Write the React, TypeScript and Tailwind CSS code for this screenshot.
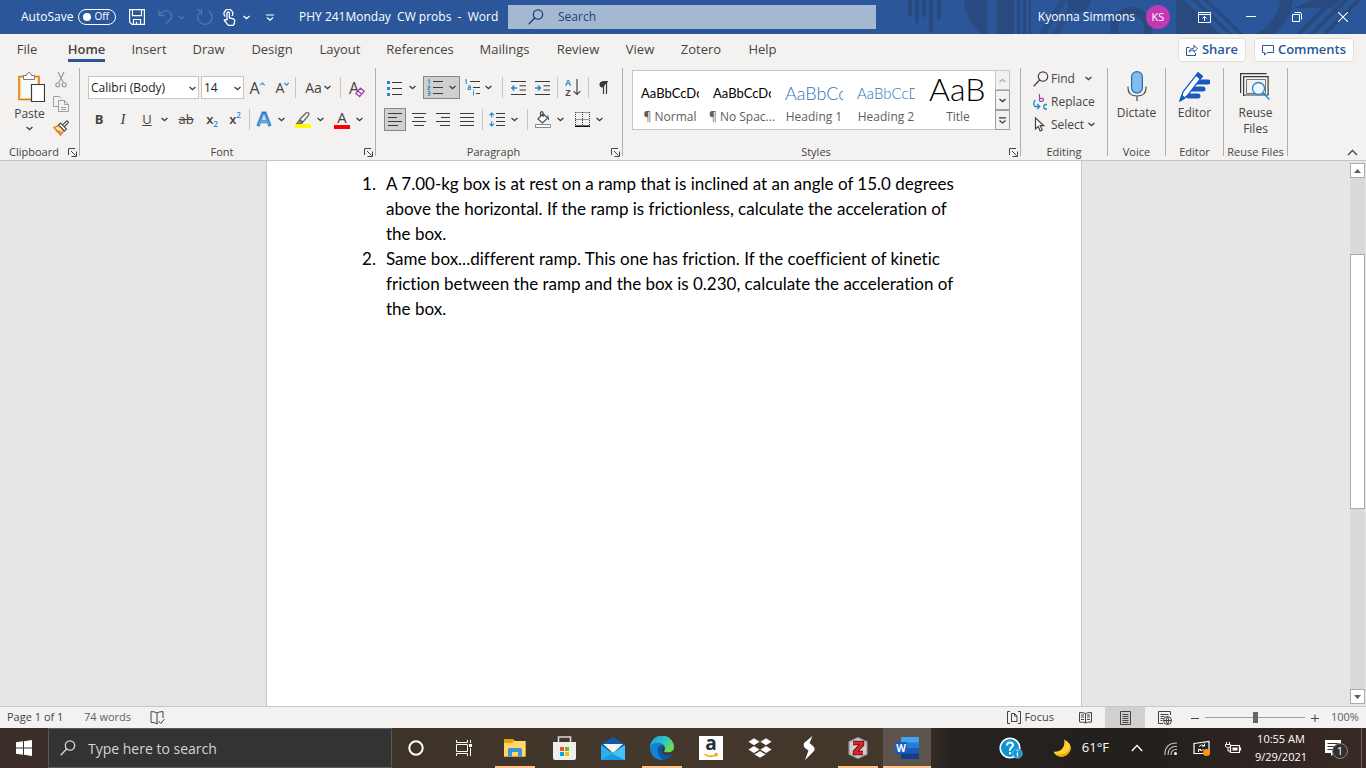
import { useState } from "react";
import type { ReactNode } from "react";

type IconProps = { w: number; h: number; className?: string; children: ReactNode };

const Icon = ({ w, h, className = "", children }: IconProps) => (
  <svg
    width={w}
    height={h}
    viewBox={`0 0 ${w} ${h}`}
    fill="none"
    stroke="currentColor"
    aria-hidden="true"
    className={`shrink-0 ${className}`}
  >
    {children}
  </svg>
);

const Chevron = ({ className = "" }: { className?: string }) => (
  <Icon w={7} h={5} className={className}>
    <path d="M.5 1l3 2.6L6.5 1" strokeWidth="1.3" />
  </Icon>
);

const Launcher = () => (
  <Icon w={9} h={9}>
    <path d="M.5 7V.5H7M3 3l4.500 4.500M8.500 3.500v5h-5" />
  </Icon>
);

const Magnifier = ({ className = "" }: { className?: string }) => (
  <Icon w={16} h={16} className={className}>
    <circle cx="10" cy="5.500" r="4.700" strokeWidth="1.200" />
    <path d="M6.600 9L.7 15.200" strokeWidth="1.300" />
  </Icon>
);

type ToolProps = { label: string; className: string; children: ReactNode };

const Tool = ({ label, className, children }: ToolProps) => (
  <button
    aria-label={label}
    className={`flex h-[23px] shrink-0 items-center justify-center ${className}`}
  >
    {children}
  </button>
);

const Divider = ({ className = "" }: { className?: string }) => (
  <div className={`h-[21px] w-px shrink-0 bg-[#c8c6c4] ${className}`} />
);

type GroupProps = { label: string; className: string; launcher?: boolean; children: ReactNode };

const Group = ({ label, className, launcher, children }: GroupProps) => (
  <>
    <section aria-label={label} className={`flex shrink-0 flex-col ${className}`}>
      <div className="h-[78px]">{children}</div>
      <div className="flex h-4 items-center">
        <span className="flex-1 whitespace-nowrap text-center text-[11px] leading-4">{label}</span>
        {launcher && (
          <button aria-label={`${label} settings`} className="w-[11px]">
            <Launcher />
          </button>
        )}
      </div>
    </section>
    <div className="mb-1 mt-0.5 w-px shrink-0 bg-[#b1afad]" />
  </>
);

const TitleArt = () => (
  <svg
    width="466"
    height="34"
    viewBox="0 0 466 34"
    aria-hidden="true"
    className="absolute right-0 top-0"
    fill="#284a7e"
    stroke="none"
  >
    <path d="M8 0h4v16H8zM15 0h4v23h-4zM22 0h4v17h-4zM29 0h4v32h-4zM37 0h4v20h-4z" />
    <path d="M64 0h23v34h-4Q66 22 64 0zM97 0h17v34H97zM117 0h3v34h-3zM123 0h3v34h-3zM129 0h2v34h-2z" />
    <path d="M139 34L160 0h7l-21 34zM152 34L173 0h6l-20 34z" opacity=".7" />
    <circle cx="179" cy="0" r="12" />
    <circle cx="231" cy="28" r="17" fill="none" stroke="#284a7e" strokeWidth="8" />
    <path d="M276 0h8l36 34h-44zM292 0h5l36 34h-5zM303 0h5l36 34h-5z" />
    <path d="M380 0q-2 22-24 34h17q18-12 20-34z" />
    <path d="M394 8l18-8h30l-10 8zM396 34L430 0h6l-34 34zM409 34L443 0h6l-34 34zM422 34L456 0h6l-34 34z" />
  </svg>
);

const TitleBar = () => {
  const [autoSave, setAutoSave] = useState(false);

  return (
    <header className="relative flex h-[34px] shrink-0 items-center bg-[#2b579a] text-xs text-white">
      <TitleArt />
      <div className="flex w-[508px] shrink-0 items-center pl-[21px]">
        <span className="w-[57px]">AutoSave</span>
        <button
          role="switch"
          aria-checked={autoSave}
          aria-label="AutoSave"
          onClick={() => setAutoSave(!autoSave)}
          className="flex h-4 w-[38px] items-center justify-between rounded-full border border-white pl-1 pr-1.5 text-[10px]"
        >
          <span className="size-2 rounded-full bg-white" />
          {autoSave ? "On" : "Off"}
        </button>
        <button aria-label="Save" className="ml-[13px]">
          <Icon w={16} h={16}>
            <path d="M.6.6h14.800v14.800H3L.6 13zM3.500.6v6h9v-6M4.500 15.400v-4.900h7v4.900M7.500 15v-2.500" strokeWidth="1.200" />
          </Icon>
        </button>
        <button aria-label="Undo" className="ml-[13px] text-[#4f76b0]">
          <Icon w={16} h={16}>
            <path d="M1 1v5.500h5.500M1.200 6.300C4 2 8.500.8 11.600 3c3 2.400 2.300 6-.2 8.300L7.500 15" strokeWidth="1.300" />
          </Icon>
        </button>
        <Chevron className="ml-1 text-[#4f76b0]" />
        <button aria-label="Redo" className="ml-[11px] text-[#4f76b0]">
          <Icon w={17} h={16}>
            <path d="M4.500 2.500A7.200 7.200 0 1 0 13 2.200M1 1.200h4.500v5" strokeWidth="1.300" />
          </Icon>
        </button>
        <button aria-label="Touch mode" className="ml-[10px]">
          <Icon w={13} h={17}>
            <path d="M2.200 7.500A4.300 4.300 0 1 1 9 7M4 11V4.300q0-1.300 1.200-1.300t1.200 1.300V9l3.800.8q1.600.4 1.500 2l-.5 3q-.5 1.700-2 1.700H6.500q-1.300 0-2-1.200L1.200 11.500q.9-1.600 2.800 0" strokeWidth="1.300" />
          </Icon>
        </button>
        <Chevron className="ml-[7px]" />
        <button aria-label="Customize quick access" className="ml-4">
          <Icon w={8} h={7}>
            <path d="M0 1h8M1 3.500l3 2.600 3-2.600" strokeWidth="1.200" />
          </Icon>
        </button>
        <h1 className="ml-[25px] whitespace-pre">PHY 241Monday  CW probs  -  Word</h1>
      </div>
      <label className="relative flex h-6 min-w-0 flex-1 items-center bg-[#a5b8d1] pl-5 text-[#1f3f74]">
        <Magnifier />
        <input
          aria-label="Search"
          placeholder="Search"
          className="ml-3.5 w-full bg-transparent outline-none placeholder:text-[#1f3f74]"
        />
      </label>
      <div className="relative flex w-[490px] shrink-0 items-center justify-end">
        <span className="mr-[11px]">Kyonna Simmons</span>
        <button className="mr-[11px] size-6 rounded-full bg-[#c239b3] text-[11px]">KS</button>
        <button aria-label="Ribbon display options" className="flex w-[47px] justify-center">
          <Icon w={13} h={11}>
            <path d="M.5.5h12v10H.5zM.5 2.500h12M6.500 9V4.500M4.500 6.500l2-2 2 2" />
          </Icon>
        </button>
        <button aria-label="Minimize" className="flex w-[46px] justify-center">
          <Icon w={10} h={10}>
            <path d="M0 4.500h10" />
          </Icon>
        </button>
        <button aria-label="Restore" className="flex w-[46px] justify-center">
          <Icon w={10} h={10}>
            <path d="M.5 2.500h7v7h-7zM2.500.5h5.500q1.500 0 1.500 1.500v5.500" />
          </Icon>
        </button>
        <button aria-label="Close" className="flex w-[46px] justify-center">
          <Icon w={10} h={10}>
            <path d="M0 0l10 10M10 0L0 10" strokeWidth="1.100" />
          </Icon>
        </button>
      </div>
    </header>
  );
};

const tabs = [
  { name: "File", width: "w-[54px]" },
  { name: "Home", width: "w-[65px]" },
  { name: "Insert", width: "w-[60px]" },
  { name: "Draw", width: "w-[59px]" },
  { name: "Design", width: "w-[68px]" },
  { name: "Layout", width: "w-[68px]" },
  { name: "References", width: "w-[92px]" },
  { name: "Mailings", width: "w-[77px]" },
  { name: "Review", width: "w-[70px]" },
  { name: "View", width: "w-[54px]" },
  { name: "Zotero", width: "w-[68px]" },
  { name: "Help", width: "w-[55px]" },
];

const TabBar = () => {
  const [active, setActive] = useState("Home");

  return (
    <nav className="flex h-8 shrink-0 items-center text-[13px]">
      {tabs.map((tab) => (
        <button
          key={tab.name}
          onClick={() => setActive(tab.name)}
          className={`flex h-8 shrink-0 justify-center ${tab.width}`}
        >
          <span
            className={
              tab.name === active
                ? "mt-1 h-6 border-b-[3px] border-[#2b579a] font-semibold leading-[23px]"
                : "mt-1 h-6 leading-[23px]"
            }
          >
            {tab.name}
          </span>
        </button>
      ))}
      <div className="ml-auto mr-3 flex gap-2 font-semibold text-[#2b579a]">
        <button className="flex h-6 w-[68px] items-center justify-center gap-1 rounded-sm border border-[#e1dfdd] bg-white">
          <Icon w={12} h={12}>
            <path d="M3.500 3.500h-3v8h9V9M3 8q.5-4 5-4V1.200l3.500 3.600L8 8.200V6Q5 6 3 8z" />
          </Icon>
          Share
        </button>
        <button className="flex h-6 w-[100px] items-center justify-center gap-1 rounded-sm border border-[#e1dfdd] bg-white">
          <Icon w={12} h={11}>
            <path d="M.5.5h11v7H5.500L2.500 10V7.500h-2z" />
          </Icon>
          Comments
        </button>
      </div>
    </nav>
  );
};

const ClipboardGroup = () => (
  <Group label="Clipboard" launcher className="w-[79px]">
    <div className="flex">
      <button className="flex w-[53px] flex-col items-center pl-1.5 pt-1.5 text-[12px] leading-4">
        <Icon w={27} h={30} className="ml-1">
          <path d="M1 4.500h20v23H1z" fill="#fbe3ae" stroke="#e07b10" strokeWidth="1.600" />
          <path d="M3.500 6h15v20h-15z" fill="#fafafa" stroke="none" />
          <path d="M5.500 3.500h3Q9 .6 11 .6t2.500 2.900h3v4h-11z" fill="#fff" stroke="#797775" />
          <path d="M13.500 12.500h13v17h-13z" fill="#fff" stroke="#3b3a39" strokeWidth="1.200" />
        </Icon>
        <span className="mt-1">Paste</span>
        <Chevron className="mt-1" />
      </button>
      <div className="flex flex-col items-center gap-2 pt-1.5 text-[#a19f9d]">
        <button aria-label="Cut">
          <Icon w={16} h={16}>
            <path d="M5 0l5.200 10.500M11 0L5.800 10.500" strokeWidth="1.300" />
            <circle cx="4.800" cy="12.800" r="2" strokeWidth="1.200" />
            <circle cx="11.200" cy="12.800" r="2" strokeWidth="1.200" />
          </Icon>
        </button>
        <button aria-label="Copy">
          <Icon w={16} h={16}>
            <path d="M5 10.500H.5V.5h6l2 2M5.500 4.500h6l4 4v7h-10zM11.500 4.500v4h4M8 11.500h5M8 13.500h5" />
          </Icon>
        </button>
        <button aria-label="Format painter">
          <Icon w={16} h={16}>
            <path d="M1 7.500l5-2 5 5-3.500 4.500z" fill="#fbe3ae" stroke="#e8872d" strokeWidth="1.600" />
            <path d="M3 10.500l5 2" stroke="#e8872d" strokeWidth="2" />
            <path d="M5.500 5l2-2 6 6-2 2zM9.500 5L14 .8l1.500 1.500L11 7" fill="#fff" stroke="#504e4c" strokeWidth="1.200" />
          </Icon>
        </button>
      </div>
    </div>
  </Group>
);

const FontGroup = () => (
  <Group label="Font" launcher className="w-[295px]">
    <div className="flex flex-col gap-[9px] pl-2 pt-2.5">
      <div className="flex items-center">
        <div className="relative">
          <select
            aria-label="Font name"
            className="block h-[23px] w-[111px] appearance-none border border-[#c8c6c4] bg-white pl-0.5 text-[12px] text-[#222]"
          >
            <option>Calibri (Body)</option>
          </select>
          <Chevron className="pointer-events-none absolute right-[3px] top-[10px]" />
        </div>
        <div className="relative ml-0.5">
          <select
            aria-label="Font size"
            className="block h-[23px] w-[43px] appearance-none border border-[#c8c6c4] bg-white pl-0.5 text-[12px] text-[#222]"
          >
            <option>14</option>
          </select>
          <Chevron className="pointer-events-none absolute right-[3px] top-[10px]" />
        </div>
        <Tool label="Grow font" className="w-[26px]">
          <span className="text-base leading-none">A</span>
          <Icon w={5} h={12} className="text-[#2b88d8]">
            <path d="M.3 3.200L2.500 1l2.200 2.200" strokeWidth="1.200" />
          </Icon>
        </Tool>
        <Tool label="Shrink font" className="w-[25px]">
          <span className="text-sm leading-none">A</span>
          <Icon w={5} h={12} className="text-[#2b88d8]">
            <path d="M.3 1l2.200 2.200L4.700 1" strokeWidth="1.200" />
          </Icon>
        </Tool>
        <Divider />
        <Tool label="Change case" className="w-11 gap-0.5">
          <span className="text-[14px]">Aa</span>
          <Chevron />
        </Tool>
        <Divider />
        <Tool label="Clear formatting" className="w-8">
          <span className="text-base leading-none">A</span>
          <Icon w={10} h={12} className="-ml-1 mt-2 text-[#a33eb2]">
            <path d="M.9 7.500l4.500-5.300 3.700 3-4.500 5.300zM3 5l3.600 3" strokeWidth="1.300" fill="#fff" />
          </Icon>
        </Tool>
      </div>
      <div className="flex items-center text-[13px]">
        <Tool label="Bold" className="w-[22px] font-bold">B</Tool>
        <Tool label="Italic" className="w-[26px] font-['Liberation_Serif'] text-[15px] italic">I</Tool>
        <Tool label="Underline" className="w-[22px] underline">U</Tool>
        <Tool label="Underline style" className="w-3">
          <Chevron />
        </Tool>
        <Tool label="Strikethrough" className="w-8 line-through">ab</Tool>
        <Tool label="Subscript" className="w-5 font-semibold">
          x<span className="mt-2 text-[8px] text-[#2b88d8]">2</span>
        </Tool>
        <Tool label="Superscript" className="w-[26px] font-semibold">
          x<span className="mb-2.5 text-[8px] text-[#2b88d8]">2</span>
        </Tool>
        <Divider className="ml-px" />
        <Tool label="Text effects" className="w-7">
          <Icon w={16} h={17}>
            <path d="M2 15L7 2h2l5 13M4.500 10.500h7" stroke="#8cc4ee" strokeWidth="4" />
            <path d="M2 15L7 2h2l5 13M4.500 10.500h7" stroke="#1e6fbe" strokeWidth="2.200" />
            <path d="M2.500 14L7.500 3h1l5 11M5 10.500h6" stroke="#e8f3fb" strokeWidth=".5" />
          </Icon>
        </Tool>
        <Chevron />
        <Tool label="Highlight colour" className="ml-1 w-7">
          <Icon w={16} h={17}>
            <path d="M5 8l6-6q1.500-1 2.500 0t0 2.500L8 11H4.500zM4.500 8L7.500 11M4 9.500L2 12.500h4.500L8 11" stroke="#605e5c" strokeWidth="1.200" />
            <path d="M0 13h16v4H0z" fill="#ffff00" stroke="none" />
          </Icon>
        </Tool>
        <Chevron />
        <Tool label="Font colour" className="ml-1 w-7">
          <span className="h-[18px] w-4 border-b-4 border-[#ff0000] text-center text-[15px] leading-[13px]">A</span>
        </Tool>
        <Chevron />
      </div>
    </div>
  </Group>
);

const Lines = ({ d }: { d: string }) => (
  <Icon w={14} h={14}>
    <path d={d} stroke="#3b3a39" strokeWidth="1.200" />
  </Icon>
);

const ParagraphGroup = () => (
  <Group label="Paragraph" launcher className="w-[246px]">
    <div className="flex flex-col gap-[9px] pl-2 pt-2.5">
      <div className="flex items-center">
        <Tool label="Bullets" className="w-5">
          <Icon w={16} h={16}>
            <path d="M6 2.500h10M6 8.500h10M6 14.500h10" stroke="#3b3a39" />
            <path d="M1 1h3v3H1zM1 7h3v3H1zM1 13h3v3H1z" fill="#1e8bcd" stroke="none" />
          </Icon>
        </Tool>
        <Chevron className="ml-[5px]" />
        <Tool label="Numbering" className="ml-[7px] w-[37px] gap-1.5 border border-[#8a8886] bg-[#d2d0ce]">
          <Icon w={16} h={17}>
            <path d="M6 2.500h10M6 8.500h10M6 14.500h10" stroke="#3b3a39" />
            <path d="M1 1.300l1.200-.8V5M.8 7h2v1.700h-1.800v1.800h2.100M.8 12.500h2v3.800h-2M1 14.400h1.800" stroke="#1e8bcd" />
          </Icon>
          <Chevron />
        </Tool>
        <Tool label="Multilevel list" className="ml-1 w-4">
          <Icon w={16} h={17}>
            <path d="M6 2.500h10M9 8.500h7M12 14.500h4" stroke="#3b3a39" />
            <path d="M1 1.300l1.200-.8V5M4 7h2.500v3.500H4V8.700h2.500M9.500 12.500v4M9.500 10.500v1" stroke="#1e8bcd" />
          </Icon>
        </Tool>
        <Chevron className="ml-[5px]" />
        <Divider className="ml-[10px]" />
        <Tool label="Decrease indent" className="ml-[3px] w-6">
          <Icon w={15} h={14}>
            <path d="M0 .5h15M8.500 4.800H15M8.500 9H15M0 13.500h15" stroke="#3b3a39" />
            <path d="M.8 7H6M3.200 4.500L.7 7l2.500 2.500" stroke="#1e8bcd" strokeWidth="1.300" />
          </Icon>
        </Tool>
        <Tool label="Increase indent" className="w-6">
          <Icon w={15} h={14}>
            <path d="M0 .5h15M8.500 4.800H15M8.500 9H15M0 13.500h15" stroke="#3b3a39" />
            <path d="M0 7h5.300M3 4.500L5.500 7 3 9.500" stroke="#1e8bcd" strokeWidth="1.300" />
          </Icon>
        </Tool>
        <Divider className="ml-[3px]" />
        <Tool label="Sort" className="w-[30px]">
          <span className="flex flex-col font-['Liberation_Sans'] text-[9px] font-bold leading-[10px]">
            <span className="text-[#1e8bcd]">A</span>
            <span>Z</span>
          </span>
          <Icon w={8} h={17} className="ml-0.5">
            <path d="M4 0v15.500M.7 12.200L4 15.500l3.300-3.300" strokeWidth="1.200" />
          </Icon>
        </Tool>
        <Divider />
        <Tool label="Show paragraph marks" className="w-7">
          <Icon w={10} h={13}>
            <path d="M9.500.5H4.500a3 3 0 0 0 0 6H5z" fill="#3b3a39" stroke="none" />
            <path d="M10 .6H4.500M5.500.5V13M8.500.5V13" stroke="#3b3a39" strokeWidth="1.200" />
          </Icon>
        </Tool>
      </div>
      <div className="flex items-center">
        <Tool label="Align left" className="w-[22px] border border-[#8a8886] bg-[#d2d0ce]">
          <Lines d="M0 .5h14M0 4.500h9M0 8.500h14M0 12.500h10" />
        </Tool>
        <Tool label="Center" className="ml-px w-6">
          <Lines d="M0 .5h14M2 4.500h10M0 8.500h14M2 12.500h10" />
        </Tool>
        <Tool label="Align right" className="w-6">
          <Lines d="M0 .5h14M5 4.500h9M0 8.500h14M4 12.500h10" />
        </Tool>
        <Tool label="Justify" className="w-6">
          <Lines d="M0 .5h14M0 4.500h14M0 8.500h14M0 12.500h14" />
        </Tool>
        <Divider className="ml-[3px]" />
        <Tool label="Line spacing" className="w-7">
          <Icon w={16} h={15}>
            <path d="M7 1.500h9M7 5.500h9M7 9.500h9M7 13.500h9" stroke="#3b3a39" />
            <path d="M2.700 1v4.500M.5 3.200L2.700 1l2.200 2.200M2.700 14V9.500M.5 11.800L2.700 14l2.200-2.200" stroke="#1e8bcd" strokeWidth="1.200" />
          </Icon>
        </Tool>
        <Chevron />
        <Divider className="ml-[9px]" />
        <Tool label="Shading" className="ml-px w-7">
          <Icon w={16} h={17}>
            <path d="M3 8l5-5.500 4.500 4.500-5 5zM5.500 5V1.500q1.500-1.800 2.500 0V6" stroke="#504e4c" strokeWidth="1.200" fill="#fff" />
            <path d="M12 4q2.500 1 2 5.500-2.500-1.500-1.500-3z" fill="#1e6fbe" stroke="none" />
            <path d="M.5 13.500h15v3H.5z" fill="#fff" stroke="#8a8886" />
          </Icon>
        </Tool>
        <Chevron />
        <Tool label="Borders" className="ml-1 w-7">
          <Icon w={15} h={15}>
            <path d="M.5.5h14M.5 7.500h14M.5 0v14M7.500 0v14M14.500 0v14" stroke="#3b3a39" strokeDasharray="1 1" />
            <path d="M0 14.200h15" stroke="#000" strokeWidth="1.500" />
          </Icon>
        </Tool>
        <Chevron />
      </div>
    </div>
  </Group>
);

const styleCards = [
  { name: "¶ Normal", sample: "AaBbCcDc", look: "items-center text-[13px] leading-7 text-black" },
  { name: "¶ No Spac...", sample: "AaBbCcDc", look: "items-center text-[13px] leading-7 text-black" },
  { name: "Heading 1", sample: "AaBbCc", look: "items-center text-[18px] leading-7 font-light text-[#2e74b5]" },
  { name: "Heading 2", sample: "AaBbCcD", look: "items-center text-[15px] leading-7 font-light text-[#2e74b5]" },
  { name: "Title", sample: "AaB", look: "items-end text-[32px] leading-9 font-light text-black" },
];

const StylesGroup = () => (
  <Group label="Styles" launcher className="w-[397px]">
    <div className="pl-[9px] pt-1">
      <div className="flex h-[60px] w-[378px] border border-[#c8c6c4] bg-white pl-px">
        {styleCards.map((card) => (
          <button key={card.name} className="flex w-[72px] shrink-0 flex-col items-center pt-2 text-[#605e5c]">
            <span
              className={`flex h-7 w-[58px] overflow-hidden whitespace-nowrap font-['Lato'] ${card.look}`}
            >
              {card.sample}
            </span>
            <span className="whitespace-nowrap text-[12px] leading-5">{card.name}</span>
          </button>
        ))}
        <div className="-my-px ml-auto -mr-px flex w-[15px] flex-col text-[#3b3a39]">
          <button
            aria-label="Previous styles"
            className="flex flex-1 items-center justify-center border border-[#c8c6c4] bg-[#f3f2f1] text-[#b1afad]"
          >
            <Chevron className="rotate-180" />
          </button>
          <button aria-label="Next styles" className="flex flex-1 items-center justify-center border border-[#a19f9d] bg-[#f3f2f1]">
            <Chevron />
          </button>
          <button aria-label="More styles" className="flex flex-1 items-center justify-center border border-[#a19f9d] bg-[#f3f2f1]">
            <Icon w={7} h={7}>
              <path d="M0 .8h7M.5 3.500l3 2.500 3-2.500" strokeWidth="1.200" />
            </Icon>
          </button>
        </div>
      </div>
    </div>
  </Group>
);

const EditingGroup = () => (
  <Group label="Editing" className="w-[86px]">
    <div className="flex flex-col pl-3 pt-px text-[12px]">
      <button className="flex h-[23px] items-center gap-0.5">
        <Magnifier />
        Find
        <Chevron className="ml-2" />
      </button>
      <button className="flex h-[23px] items-center gap-1">
        <Icon w={14} h={16}>
          <path d="M6.500 0v7M6.500 4.300h2.500q1.500 0 1.500 1.500T9 7.300H6.500" stroke="#a33eb2" strokeWidth="1.200" />
          <path d="M2.500 6Q-.8 9 2 12.500h4.500M4.200 10l2.500 2.500L4.200 15M14 10.500h-1.500q-1.700 0-1.700 2.200t1.700 2.300H14" stroke="#1e8bcd" strokeWidth="1.300" />
        </Icon>
        Replace
      </button>
      <button className="flex h-[23px] items-center gap-1">
        <Icon w={14} h={15}>
          <path d="M2.500.9v11l2.700-2.500 2 4.600 2-1-2-4.300h3.500z" strokeWidth="1.200" fill="#fff" />
        </Icon>
        Select
        <Chevron />
      </button>
    </div>
  </Group>
);

type BigButtonProps = { label: string; children: ReactNode };

const BigButton = ({ label, children }: BigButtonProps) => (
  <button className="flex w-full flex-col items-center pt-1 text-[12px] leading-4">
    <span className="mb-[3px] flex h-8 items-center">{children}</span>
    {label.split(" ").map((word) => (
      <span key={word}>{word}</span>
    ))}
  </button>
);

const Ribbon = () => (
  <div className="flex h-[95px] shrink-0 overflow-hidden border-b border-[#c8c6c4]">
    <ClipboardGroup />
    <FontGroup />
    <ParagraphGroup />
    <StylesGroup />
    <EditingGroup />
    <Group label="Voice" className="w-[57px]">
      <BigButton label="Dictate">
        <Icon w={20} h={31}>
          <rect x="4.600" y=".6" width="10.800" height="21.500" rx="5.400" fill="#83bdec" stroke="#1e6fbe" strokeWidth="1.200" />
          <path d="M1 15.500v1.500q0 8 9 8t9-8v-1.500M10 25v5" stroke="#504e4c" strokeWidth="1.200" />
        </Icon>
      </BigButton>
    </Group>
    <Group label="Editor" className="w-[57px]">
      <BigButton label="Editor">
        <Icon w={31} h={31}>
          <path d="M17 11h12M13.500 18h10.500M9.500 25h9.500" stroke="#185abd" strokeWidth="5" strokeLinecap="round" />
          <path d="M1.200 29.500l3-9L19 1.800l4.300 3.500L8.500 24.500z" fill="#fff" stroke="#185abd" strokeWidth="1.300" />
          <path d="M16.800 4.500L19 1.500l4.500 3.500-2.300 3zM.8 30.200l2-6 3.500 3z" fill="#185abd" stroke="#185abd" />
        </Icon>
      </BigButton>
    </Group>
    <Group label="Reuse Files" className="w-[63px]">
      <BigButton label="Reuse Files">
        <Icon w={31} h={29}>
          <path d="M.6 21V1.600h26M3.600 24V4.600h24.500V23H3.600" stroke="#3b3a39" strokeWidth="1.200" />
          <path d="M6.500 7.500h19v14h-19z" stroke="#797775" />
          <circle cx="18.500" cy="16.500" r="6" fill="#eef7fd" stroke="#1e8bcd" strokeWidth="1.300" />
          <path d="M23 21l6.500 6.500" stroke="#1e8bcd" strokeWidth="1.400" />
        </Icon>
      </BigButton>
    </Group>
    <button aria-label="Collapse the ribbon" className="mb-1 ml-auto mr-2 self-end">
      <Icon w={11} h={7}>
        <path d="M1 6l4.500-4.500L10 6" strokeWidth="1.300" />
      </Icon>
    </button>
  </div>
);

const problems = [
  "A 7.00-kg box is at rest on a ramp that is inclined at an angle of 15.0 degrees above the horizontal. If the ramp is frictionless, calculate the acceleration of the box.",
  "Same box...different ramp. This one has friction. If the coefficient of kinetic friction between the ramp and the box is 0.230, calculate the acceleration of the box.",
];

const Document = () => (
  <main className="flex min-h-0 flex-1 bg-[#e6e6e6]">
    <div className="flex flex-1 justify-center overflow-hidden pr-0.5">
      <article className="w-[816px] border-x border-[#c6c6c6] bg-white pl-[95px] pr-[114px] pt-[10px] font-['Lato'] text-[17px] leading-[25px] text-black [font-variant-ligatures:none]">
        <ol>
          {problems.map((problem, i) => (
            <li key={problem} className="flex">
              <span className="w-6 shrink-0">{i + 1}.</span>
              <p>{problem}</p>
            </li>
          ))}
        </ol>
      </article>
    </div>
    <div className="flex w-4 shrink-0 flex-col pb-0.5 pr-px pt-0.5">
      <button aria-label="Scroll up" className="flex h-[15px] items-center justify-center border border-[#ababab] bg-white">
        <Icon w={7} h={4}>
          <path d="M0 4l3.500-4L7 4z" fill="#605e5c" stroke="none" />
        </Icon>
      </button>
      <div className="flex-[76] bg-[#dadada]" />
      <div className="flex-[255] border border-[#ababab] bg-white" />
      <div className="flex-[181] bg-[#dadada]" />
      <button aria-label="Scroll down" className="flex h-[15px] items-center justify-center border border-[#ababab] bg-white">
        <Icon w={7} h={4}>
          <path d="M0 0l3.500 4L7 0z" fill="#605e5c" stroke="none" />
        </Icon>
      </button>
    </div>
  </main>
);

const StatusBar = () => (
  <footer className="flex h-[22px] shrink-0 items-center border-t border-[#c8c6c4] text-[11px]">
    <span className="w-[84px] pl-[7px]">Page 1 of 1</span>
    <span className="w-[66px] text-[#605e5c]">74 words</span>
    <button aria-label="Proofing">
      <Icon w={15} h={14}>
        <path d="M7 2Q5 .6 1 .6v10.800q4 0 6 1.400zM7 2Q9 .6 13 .6V7M7 12.800l1-.8M8.500 10l2.300 2.500L14.500 8" />
      </Icon>
    </button>
    <div className="ml-auto flex items-center self-stretch">
      <button className="mr-[11px] flex items-center gap-[3px]">
        <Icon w={14} h={13}>
          <path d="M3 .5H.5v12H3M11 .5h2.500v12H11M4.500 2.500h3l2.500 2.500v5.500H4.500zM7.500 2.500V5H10" />
        </Icon>
        Focus
      </button>
      <button aria-label="Read mode" className="flex w-10 justify-center">
        <Icon w={13} h={12}>
          <path d="M6.500 1.500Q5 .5.5.5v9.500q4.500 0 6 1 1.500-1 6-1V.5q-4.500 0-6 1zM6.500 1.500V11M2 3h3M2 5h3M2 7.500h3M8 3h3M8 5h3M8 7.500h3" />
        </Icon>
      </button>
      <button aria-label="Print layout" className="flex w-10 items-center justify-center self-stretch bg-[#d2d0ce]">
        <Icon w={11} h={14}>
          <path d="M.5.5h10v13H.5zM2.500 3.500h6M2.500 5.500h6M2.500 7.500h6M2.500 9.500h6M2.500 11.500h6" />
        </Icon>
      </button>
      <button aria-label="Web layout" className="flex w-10 justify-center">
        <Icon w={14} h={14}>
          <path d="M5 12.500H.5V.5h12V4M2.500 3.500h8M2.500 5.500h4M2.500 7.500h3M2.500 9.500h2" />
          <circle cx="9.500" cy="9.500" r="4" />
          <path d="M5.500 9.500h8M9.500 5.500q-3 4 0 8q3-4 0-8" />
        </Icon>
      </button>
      <button aria-label="Zoom out" className="ml-1.5">
        <Icon w={8} h={8}>
          <path d="M0 4.500h8" />
        </Icon>
      </button>
      <input
        type="range"
        aria-label="Zoom"
        min="0"
        max="100"
        defaultValue="50"
        className="ml-1.5 h-4 w-[100px] appearance-none bg-[linear-gradient(#a19f9d,#a19f9d)] bg-[length:100%_1px] bg-center bg-no-repeat [&::-webkit-slider-thumb]:h-[11px] [&::-webkit-slider-thumb]:w-[5px] [&::-webkit-slider-thumb]:appearance-none [&::-webkit-slider-thumb]:bg-[#666]"
      />
      <button aria-label="Zoom in" className="ml-1.5">
        <Icon w={8} h={8}>
          <path d="M0 4.500h8M4 .5v8" />
        </Icon>
      </button>
      <span className="w-[47px] pl-3 text-[#605e5c]">100%</span>
    </div>
  </footer>
);

const FolderIcon = () => (
  <Icon w={22} h={20}>
    <g stroke="none">
      <path d="M0 1h9l2 2h10.500v15.500H0z" fill="#e5a50a" />
      <path d="M0 5h8l2-2h11.500v15.500H0z" fill="#ffd869" />
      <path d="M4 18.500v-7q0-1.500 1.500-1.500h11q1.500 0 1.500 1.500v7h-4V14H8v4.500z" fill="#3f93d8" />
    </g>
  </Icon>
);

const StoreIcon = () => (
  <Icon w={23} h={24}>
    <path d="M5.500 7V1h12v6" stroke="#d8d8d8" strokeWidth="1.600" />
    <g stroke="none">
      <path d="M0 6h23v16q0 2-2 2H2q-2 0-2-2z" fill="#eee" />
      <path d="M7 11h4v4H7z" fill="#f25022" />
      <path d="M12 11h4v4h-4z" fill="#7fba00" />
      <path d="M7 16h4v4H7z" fill="#00a4ef" />
      <path d="M12 16h4v4h-4z" fill="#ffb900" />
    </g>
  </Icon>
);

const MailIcon = () => (
  <Icon w={24} h={23}>
    <g stroke="none">
      <path d="M0 7.500L12 0l12 7.500V12H0z" fill="#0f5ba8" />
      <path d="M2 7h20l-10 9z" fill="#f4f4f4" />
      <path d="M0 8l12 8.500L0 23z" fill="#2ab0ee" />
      <path d="M24 8v15H0z" fill="#41c4f4" />
      <path d="M24 23H0l11-6.500z" fill="#1b98e0" />
    </g>
  </Icon>
);

const EdgeIcon = () => (
  <Icon w={24} h={24}>
    <defs>
      <linearGradient id="edge-top" x1="0" y1="0" x2="1" y2=".5">
        <stop offset="0" stopColor="#1c9bd8" />
        <stop offset=".6" stopColor="#2fc4c8" />
        <stop offset="1" stopColor="#6bdc4e" />
      </linearGradient>
    </defs>
    <g stroke="none">
      <circle cx="12" cy="12" r="12" fill="#0c59a4" />
      <path d="M0 12A12 12 0 0 1 24 11q0 5-6 5.500-4 0-4-1.500 2-2 .5-4.800Q12 7 8 7 2 7 0 12z" fill="url(#edge-top)" />
      <path d="M0 12Q2 7 8 7q3 0 5 2-5-.5-5.500 5.500Q8 21 13 24 1 24 0 12z" fill="#1780d0" />
      <path d="M14 15q0 1.500 4 1.500 4 0 6-3v4.500l-1.500 0Q18 20 14 18.500 10.500 16.500 12 12q1.500-1.500 2.500-.5 1 2-.5 3.500z" fill="#43372c" />
    </g>
  </Icon>
);

const AmazonIcon = () => (
  <span className="flex size-6 flex-col items-center bg-white text-[19px] font-bold leading-[15px] text-[#232f3e]">
    a
    <Icon w={14} h={5} className="mt-0.5">
      <path d="M.5 1q6 4.500 12 .5M10.500.8l2.500.2-.7 2.500" stroke="#ff9900" strokeWidth="1.500" />
    </Icon>
  </span>
);

const DropboxIcon = () => (
  <Icon w={24} h={20}>
    <path
      d="M6 0l6 3.800-6 3.800L0 3.800zM18 0l6 3.800-6 3.800-6-3.800zM6 7.800l6 3.800-6 3.800-6-3.800zM18 7.800l6 3.800-6 3.800-6-3.800zM12 12.800l6 3.700-6 3.500-6-3.500z"
      fill="#fff"
      stroke="#43372c"
      strokeWidth=".6"
    />
  </Icon>
);

const BoltIcon = () => (
  <Icon w={12} h={24}>
    <path d="M9.500 0L1 7q-1 3 1 5l3.500 2.500L2 24l9-9q1.500-2.500-.5-4.500L6.500 7z" fill="#fff" stroke="none" />
  </Icon>
);

const ZoteroIcon = () => (
  <Icon w={20} h={22}>
    <g stroke="none">
      <path d="M10 0l9.500 4.500v13L10 22 .5 17.500v-13z" fill="#aaa7a5" />
      <path d="M10 1.500l8 4v11l-8 4-8-4v-11z" fill="#d2d0ce" />
    </g>
    <path d="M5 6h9v1.500L7 15v1h8" stroke="#4a0f12" strokeWidth="4.500" />
    <path d="M5 6h9v1.500L7 15v1h8" stroke="#e0232d" strokeWidth="3" />
  </Icon>
);

const WordIcon = () => (
  <Icon w={24} h={22}>
    <g stroke="none">
      <path d="M6 0h18v6H6z" fill="#41a5ee" />
      <path d="M6 5.500h18V11H6z" fill="#2b7cd3" />
      <path d="M6 11h18v5.500H6z" fill="#185abd" />
      <path d="M6 16.500h18V22H6z" fill="#103f91" />
      <path d="M0 5h12v12H0z" fill="#185abd" />
    </g>
    <text x="6" y="14.500" textAnchor="middle" fontSize="10" fontWeight="700" fill="#fff" stroke="none">
      W
    </text>
  </Icon>
);

const apps = [
  { name: "File Explorer", icon: <FolderIcon />, state: "open" },
  { name: "Microsoft Store", icon: <StoreIcon />, state: "closed" },
  { name: "Mail", icon: <MailIcon />, state: "closed" },
  { name: "Edge", icon: <EdgeIcon />, state: "open" },
  { name: "Amazon", icon: <AmazonIcon />, state: "closed" },
  { name: "Dropbox", icon: <DropboxIcon />, state: "closed" },
  { name: "Power", icon: <BoltIcon />, state: "closed" },
  { name: "Zotero", icon: <ZoteroIcon />, state: "open" },
  { name: "Word", icon: <WordIcon />, state: "active" },
];

const Taskbar = () => (
  <div className="flex h-10 shrink-0 bg-[linear-gradient(90deg,#3b2e28_0%,#3d3328_30%,#44382c_45%,#43372c_66%,#24211f_70%,#24201e_85%,#3a2a25_100%)] text-white">
    <button aria-label="Start" className="flex w-12 shrink-0 items-center justify-center">
      <Icon w={16} h={16}>
        <path d="M0 2.300L7 1.300V7.500H0zM8 1.200L16 0v7.500H8zM0 8.500h7v6.200l-7-1zM8 8.500h8V16l-8-1.200z" fill="#fff" stroke="none" />
      </Icon>
    </button>
    <label className="flex w-[344px] shrink-0 items-center border border-[#5a5a5a] bg-[#333] pl-[11px]">
      <Magnifier className="text-[#ddd]" />
      <input
        aria-label="Type here to search"
        placeholder="Type here to search"
        className="ml-3 w-full bg-transparent text-[14px] outline-none placeholder:text-[#d4d4d4]"
      />
    </label>
    <button aria-label="Cortana" className="flex w-12 shrink-0 items-center justify-center">
      <Icon w={16} h={16}>
        <circle cx="8" cy="8" r="6.700" strokeWidth="2" />
      </Icon>
    </button>
    <button aria-label="Task view" className="mr-[3px] flex w-12 shrink-0 items-center justify-center">
      <Icon w={17} h={16}>
        <path d="M.5 0v2.500h11V0M.5 16v-2.500h11V16M.5 4.500h11v7H.5zM14.500 0v3M14.500 8v8" />
        <path d="M13 4h3v3h-3z" fill="#fff" stroke="none" />
      </Icon>
    </button>
    <div className="flex shrink-0 gap-px">
      {apps.map((app) => (
        <button
          key={app.name}
          aria-label={app.name}
          className={`flex h-10 w-12 flex-col items-center ${app.state === "active" ? "bg-[#5c534d]" : ""}`}
        >
          <span className="flex flex-1 items-center pt-0.5">{app.icon}</span>
          {app.state === "open" && <span className="h-0.5 w-10 bg-[#ffc083]" />}
          {app.state === "active" && <span className="h-0.5 w-12 bg-[#ffc083]" />}
          {app.state === "closed" && <span className="h-0.5" />}
        </button>
      ))}
    </div>
    <div className="ml-auto flex items-center">
      <button aria-label="Get help" className="mr-[30px]">
        <Icon w={24} h={22}>
          <circle cx="11" cy="11" r="9.800" fill="#0f94d4" stroke="#fff" strokeWidth="1.600" />
          <path d="M8 8.500q0-3 3-3t3 2.500q0 1.500-1.500 2.300T11 13v.8M11 15v2.300" stroke="#fff" strokeWidth="2" />
          <circle cx="18.500" cy="16.500" r="4.700" fill="#0f94d4" stroke="#7fc8ee" strokeWidth=".8" />
          <path d="M18.500 15.500v4M18.500 13v1.300" stroke="#fff" strokeWidth="1.400" />
        </Icon>
      </button>
      <button className="flex items-center gap-[11px] text-[13px]">
        <Icon w={18} h={18}>
          <path d="M11 .5Q20 5 17 12q-3.500 6.500-10.500 5.500Q2 16.500.5 12.500q5 1 8.500-2.500 3.500-4 2-9.500z" fill="#ffd02f" stroke="none" />
          <path d="M17.500 8.500q0 7-7 9-5 .8-8-2Q14 16.500 17.500 8.500z" fill="#f0a800" stroke="none" />
        </Icon>
        61°F
      </button>
      <button aria-label="Show hidden icons" className="ml-[22px]">
        <Icon w={12} h={8}>
          <path d="M.8 7L6 1.500 11.200 7" strokeWidth="1.300" />
        </Icon>
      </button>
      <button aria-label="Network" className="ml-[21px]">
        <Icon w={13} h={13}>
          <path d="M.8 13Q.8 1 13 1M4 13Q4 4.200 13 4.200M7 13q0-5.700 6-5.700" stroke="#c4c2c0" strokeWidth="1.100" />
          <circle cx="11.500" cy="11.500" r="1.500" fill="#fff" stroke="none" />
        </Icon>
      </button>
      <button aria-label="Updates" className="ml-4">
        <Icon w={18} h={17}>
          <path d="M1 3.500l15-2v12H1z" strokeWidth="1.200" />
          <path d="M11.500 6Q8.500 3.500 6 6.500M11.500 3.500V6H9M5.500 9q2.500 3 5 .5M5.500 12V9.500H8" />
          <circle cx="13.500" cy="12.500" r="3.500" fill="#ff9412" stroke="none" />
        </Icon>
      </button>
      <button aria-label="Battery" className="ml-3.5">
        <Icon w={17} h={12}>
          <path d="M5.500 3.500h9v7h-9zM15.500 5.500v3" strokeWidth="1.200" />
          <path d="M7.500 5.500h5v3h-5z" fill="#fff" stroke="none" />
          <path d="M1.500 0v2M4.500 0v2M.5 2.500h5v2l-2 1h-1l-2-1zM3 5.500V9h2" />
        </Icon>
      </button>
      <button className="flex w-[78px] flex-col items-center text-[11px] leading-[18px]">
        <span>10:55 AM</span>
        <span>9/29/2021</span>
      </button>
      <button aria-label="1 new notification" className="relative ml-[5px] mr-3 h-6 w-6">
        <Icon w={16} h={16}>
          <path d="M0 0h16v13H9l-3 3v-3H0z" fill="#fff" stroke="none" />
          <path d="M2.500 3.500h11M2.500 6.500h11M2.500 9.500h7" stroke="#35302e" />
        </Icon>
        <span className="absolute left-[7px] top-[7px] size-4 rounded-full border border-[#8a8886] bg-[#33302f] text-[11px] leading-[14px]">
          1
        </span>
      </button>
      <div className="mr-1 h-10 w-px bg-[#6b605b]" />
    </div>
  </div>
);

export default function App() {
  return (
    <div className="flex h-screen flex-col overflow-hidden bg-[#f3f2f1] font-['Open_Sans',sans-serif] text-[#444]">
      <TitleBar />
      <TabBar />
      <Ribbon />
      <Document />
      <StatusBar />
      <Taskbar />
    </div>
  );
}
